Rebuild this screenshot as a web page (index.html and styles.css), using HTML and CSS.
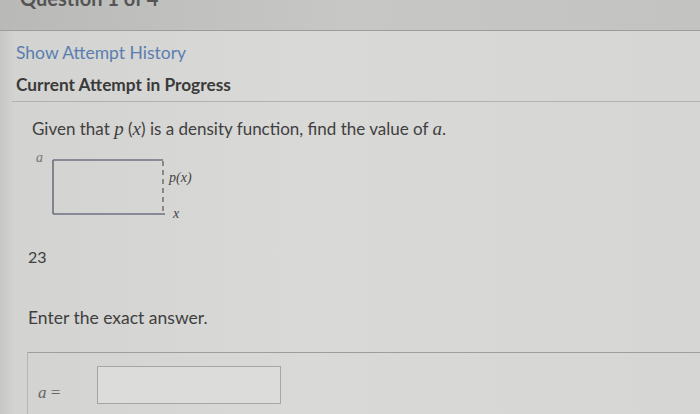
FILE: index.html
```html
<!DOCTYPE html>
<html>
<head>
<meta charset="utf-8">
<link rel="stylesheet" href="styles.css">
</head>
<body>
<div class="page">
  <div class="topband"><div class="qtitle">Question 1 of 4</div></div>
  <div class="content">
    <div class="attempts">
      <div class="history">Show Attempt History</div>
      <div class="current">Current Attempt in Progress</div>
    </div>
    <div class="question">
      <p class="prompt">Given that <i class="m">p</i> (<i class="m">x</i>) is a density function, find the value of <i class="m">a</i>.</p>
      <svg class="diagram" width="170" height="76" viewBox="0 0 170 76">
        <text x="3" y="11" class="lbl">a</text>
        <line x1="20" y1="9" x2="130" y2="9" stroke="#6e7080" stroke-width="1.6"/>
        <line x1="20" y1="9" x2="20" y2="63" stroke="#6e7080" stroke-width="1.6"/>
        <line x1="20" y1="63" x2="132" y2="63" stroke="#6e7080" stroke-width="1.6"/>
        <line x1="130" y1="10" x2="130" y2="62" stroke="#555" stroke-width="1.2" stroke-dasharray="5,4"/>
        <text x="136" y="31" class="lbl2">p(x)</text>
        <text x="140" y="67" class="lbl2">x</text>
      </svg>
      <div class="value">23</div>
      <div class="instr">Enter the exact answer.</div>
    </div>
    <div class="answer">
      <span class="avar"><i>a</i> =</span>
      <div class="inputbox"></div>
    </div>
  </div>
</div>
</body>
</html>
```
FILE: styles.css
```css
* { box-sizing: border-box; }
html, body { margin: 0; padding: 0; }
body {
  width: 700px;
  height: 414px;
  overflow: hidden;
  background: #d4d4d2;
  font-family: Lato, "Open Sans", sans-serif;
}
.page {
  height: 414px;
  background: linear-gradient(90deg, #c6c6c4 0px, #d3d3d1 14px, #d9d9d7 300px, #d6d6d4 700px);
}
.topband {
  height: 31px;
  overflow: hidden;
  background: linear-gradient(90deg, #b9b9b7, #c7c7c5 50%, #c3c3c1);
  border-bottom: 1px solid #9c9c9a;
}
.qtitle {
  margin-top: -14px;
  padding-left: 20px;
  font-size: 20px;
  font-weight: 700;
  color: #555;
}
.content { padding-left: 12px; }
.attempts {
  padding: 11px 0 5px 4px;
  border-bottom: 1px solid #b2b2b0;
}
.history {
  font-size: 17.5px;
  color: #5a7eb0;
  line-height: 22px;
}
.current {
  margin-top: 10px;
  font-size: 17.3px;
  font-weight: 700;
  color: #3a3a3a;
  line-height: 22px;
}
.question { padding: 15px 0 0 20px; }
.prompt {
  margin: 0;
  font-size: 17px;
  color: #404040;
  line-height: 24px;
}
.m { font-family: "Liberation Serif", serif; font-size: 19px; }
.diagram { display: block; margin: 10px 0 0 1px; }
.lbl { font-family: "Liberation Serif", serif; font-style: italic; font-size: 14px; fill: #777; }
.lbl2 { font-family: "Liberation Serif", serif; font-style: italic; font-size: 14px; fill: #444; }
.value {
  margin-top: 20px;
  margin-left: -4px;
  font-size: 16px;
  color: #404040;
}
.instr {
  margin-top: 41px;
  margin-left: -4px;
  font-size: 17.5px;
  color: #404040;
}
.answer {
  margin: 24px 0 0 15px;
  border-top: 1px solid #9e9e9c;
  border-left: 1px solid #b6b6b4;
  height: 70px;
  display: flex;
  align-items: flex-start;
  padding: 13px 0 0 10px;
}
.avar {
  margin-top: 17px;
  font-family: "Liberation Serif", serif;
  font-size: 17px;
  color: #666;
  width: 59px;
}
.inputbox {
  width: 184px;
  height: 38px;
  border: 1px solid #a6a6a4;
  background: #dcdcda;
}
```
